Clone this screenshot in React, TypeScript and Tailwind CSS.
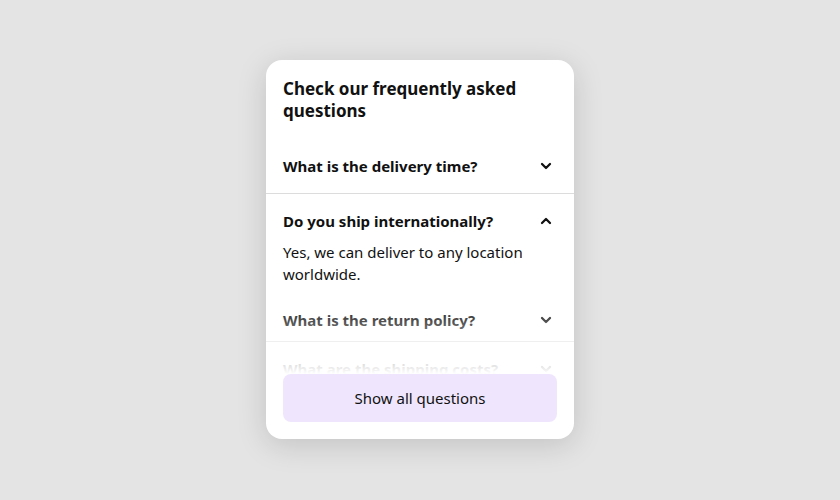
import { ChevronDown, ChevronUp } from "lucide-react";

type Faq = {
  q: string;
  a?: string;
  open?: boolean;
};

const faqs: Faq[] = [
  { q: "What is the delivery time?" },
  { q: "Do you ship internationally?", a: "Yes, we can deliver to any location worldwide.", open: true },
  { q: "What is the return policy?" },
  { q: "What are the shipping costs?" },
];

export default function App() {
  return (
    <div
      className="flex min-h-[500px] w-full items-start justify-center bg-[#e4e4e4] pt-[60px]"
      style={{ fontFamily: '"Noto Sans", "Open Sans", sans-serif' }}
    >
      <div className="flex w-[308px] flex-col overflow-hidden rounded-2xl bg-white shadow-[0_6px_30px_rgba(0,0,0,0.15)]">
        <div className="relative h-[314px] overflow-hidden pt-[18px]">
          <h2 className="px-[17px] text-[17px] font-bold leading-[22px] text-[#111]">
            Check our frequently asked questions
          </h2>
          <div className="mt-[17px] flex flex-col">
            {faqs.map((f, i) => (
              <div
                key={f.q}
                className={i === 0 || i === 2 ? "border-b border-[#dcdcdc]" : ""}
              >
                <div
                  className={
                    "flex items-center justify-between px-[17px] pt-4 " +
                    (f.open ? "pb-2" : i === 2 ? "pb-[10px]" : "pb-4")
                  }
                >
                  <span className="text-[15px] font-bold leading-[22px] text-[#111]">{f.q}</span>
                  {f.open ? (
                    <ChevronUp size={16} strokeWidth={3.4} className="mr-[3px] text-[#111]" />
                  ) : (
                    <ChevronDown size={16} strokeWidth={3.4} className="mr-[3px] text-[#111]" />
                  )}
                </div>
                {f.open && (
                  <p className="px-[17px] pt-px pb-[8px] text-[15px] leading-[22px] text-[#111]">{f.a}</p>
                )}
              </div>
            ))}
          </div>
          {/* fade the list out towards the button */}
          <div className="absolute inset-x-0 bottom-0 h-[72px] bg-gradient-to-b from-white/0 to-white" />
        </div>
        <div className="px-[17px] pb-[17px]">
          <button className="h-12 w-full rounded-lg bg-[#efe6fd] text-[15px] leading-[22px] text-[#111]">
            Show all questions
          </button>
        </div>
      </div>
    </div>
  );
}
